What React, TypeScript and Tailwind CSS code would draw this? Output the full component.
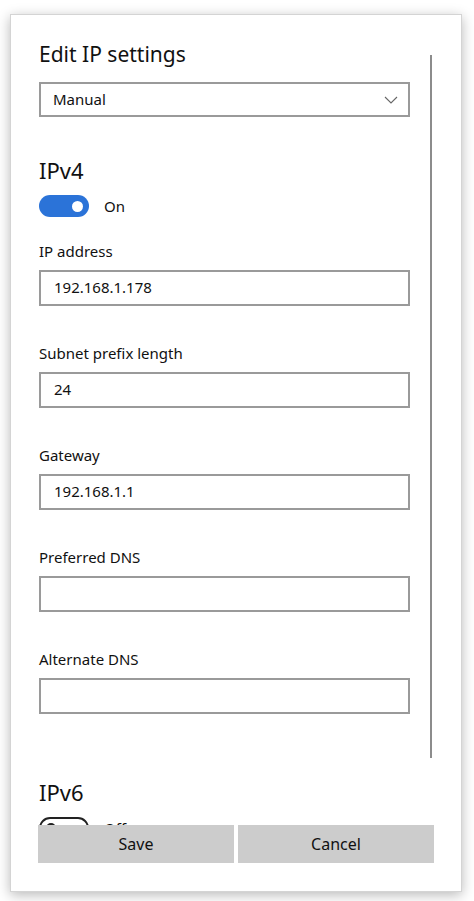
const font = { fontFamily: '"Noto Sans", "Open Sans", Arial, sans-serif' };

function Field({ label, value, first }: { label: string; value?: string; first?: boolean }) {
  return (
    <div className={first ? "mt-[23px]" : "mt-[37px]"}>
      <div className="h-5 text-[15px] leading-5 text-[#111]">{label}</div>
      <div className="mt-[9px] flex h-[36px] w-[371px] items-center border-2 border-[#9a9a9a] bg-white pl-[13px] text-[15px] text-[#111]">
        {value}
      </div>
    </div>
  );
}

export default function App() {
  return (
    <div className="min-h-[901px] bg-white pt-[14px]" style={font}>
      <div className="relative ml-[10px] h-[878px] w-[452px] border border-[#d4d4d4] bg-white shadow-[0_3px_12px_rgba(0,0,0,0.28)]">
        <div className="h-[810px] overflow-hidden pl-[28px] pt-[25px]">
          <h1 className="h-[28px] text-[21px] leading-[28px] text-[#111]">Edit IP settings</h1>
          <div className="mt-[14px] flex h-[35px] w-[371px] items-center justify-between border-2 border-[#9a9a9a] pl-[12px] pr-[10px] text-[15px] text-[#111]">
            <span>Manual</span>
            <svg width="14" height="8" viewBox="0 0 14 8" fill="none" stroke="#666" strokeWidth="1.1">
              <path d="M1 1l6 6 6-6" />
            </svg>
          </div>

          <h2 className="mt-[38px] h-[30px] text-[22px] leading-[30px] text-[#111]">IPv4</h2>
          <div className="mt-[10px] flex items-center gap-[15px]">
            <div className="flex h-[22px] w-[50px] items-center justify-end rounded-full bg-[#2b73d8] pr-[6px]">
              <div className="h-[11px] w-[11px] rounded-full bg-white" />
            </div>
            <span className="text-[15px] text-[#111]">On</span>
          </div>

          <Field first label="IP address" value="192.168.1.178" />
          <Field label="Subnet prefix length" value="24" />
          <Field label="Gateway" value="192.168.1.1" />
          <Field label="Preferred DNS" />
          <Field label="Alternate DNS" />

          <h2 className="mt-[63px] h-[30px] text-[22px] leading-[30px] text-[#111]">IPv6</h2>
          <div className="mt-[10px] flex items-center gap-[15px]">
            <div className="flex h-[22px] w-[50px] items-center rounded-full border-2 border-[#222] pl-[5px]">
              <div className="h-[10px] w-[10px] rounded-full bg-[#222]" />
            </div>
            <span className="text-[15px] text-[#111]">Off</span>
          </div>
        </div>

        <div className="flex gap-[4px] pl-[27px] pr-[27px]">
          <button className="h-[38px] flex-1 bg-[#cccccc] text-[16px] text-[#111]">Save</button>
          <button className="h-[38px] flex-1 bg-[#cccccc] text-[16px] text-[#111]">Cancel</button>
        </div>

        <div className="absolute left-[419px] top-[40px] h-[703px] w-[2px] bg-[#8c8c8c]" />
      </div>
    </div>
  );
}
